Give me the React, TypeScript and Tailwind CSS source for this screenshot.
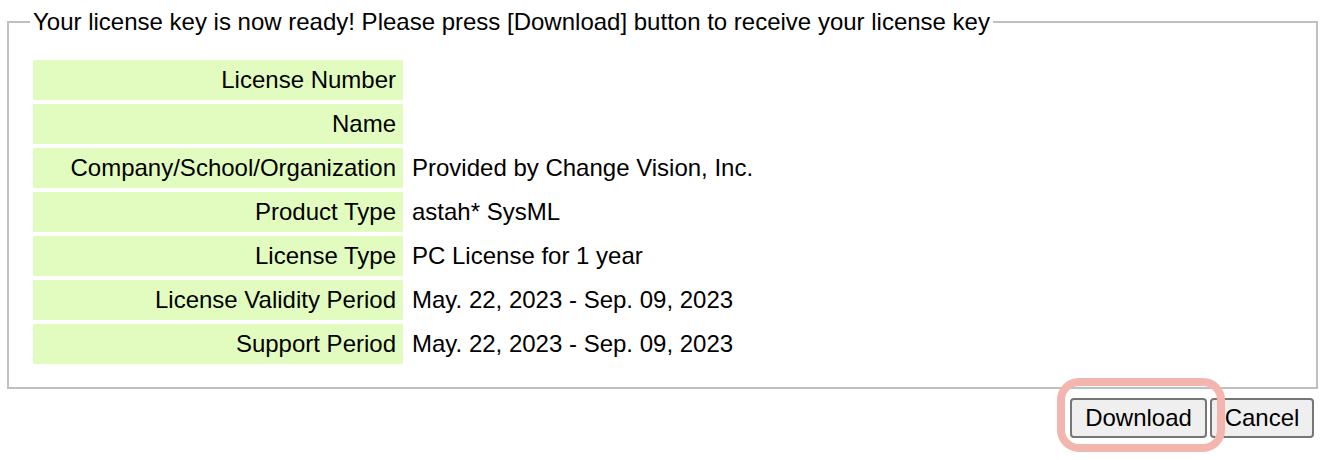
const rows: [string, string][] = [
  ["License Number", ""],
  ["Name", ""],
  ["Company/School/Organization", "Provided by Change Vision, Inc."],
  ["Product Type", "astah* SysML"],
  ["License Type", "PC License for 1 year"],
  ["License Validity Period", "May. 22, 2023 - Sep. 09, 2023"],
  ["Support Period", "May. 22, 2023 - Sep. 09, 2023"],
]

export default function App() {
  return (
    <div className="w-[1332px] h-[460px] bg-white text-black text-[24px] font-['Liberation_Sans',Arial,sans-serif]">
      <fieldset className="mt-[7px] ml-[7px] mr-[14px] border-2 border-[#c0c0c0] pl-[21px] pb-[23px]">
        <legend className="px-[3px] leading-[30px]">
          Your license key is now ready! Please press [Download] button to receive your license key
        </legend>
        <div className="ml-[3px] mt-[23px] flex flex-col gap-[4px]">
          {rows.map(([label, value]) => (
            <div key={label} className="flex h-[40px] items-center">
              <div className="w-[370px] h-full bg-[#e2fcc0] flex items-center justify-end pr-[7px]">{label}</div>
              <div className="pl-[9px]">{value}</div>
            </div>
          ))}
        </div>
      </fieldset>
      <div className="flex justify-end gap-[3px] mt-[9px] mr-[18px]">
        <div className="relative">
          <button className="h-[40px] w-[137px] bg-[#efefef] border-2 border-[#767676] rounded-[4px]">Download</button>
          <span className="absolute -left-[13px] -right-[18px] -top-[20px] -bottom-[14px] border-[8px] border-[#f3b6af] rounded-[22px] pointer-events-none" />
        </div>
        <button className="h-[40px] w-[104px] bg-[#efefef] border-2 border-[#767676] rounded-[4px]">Cancel</button>
      </div>
    </div>
  )
}
